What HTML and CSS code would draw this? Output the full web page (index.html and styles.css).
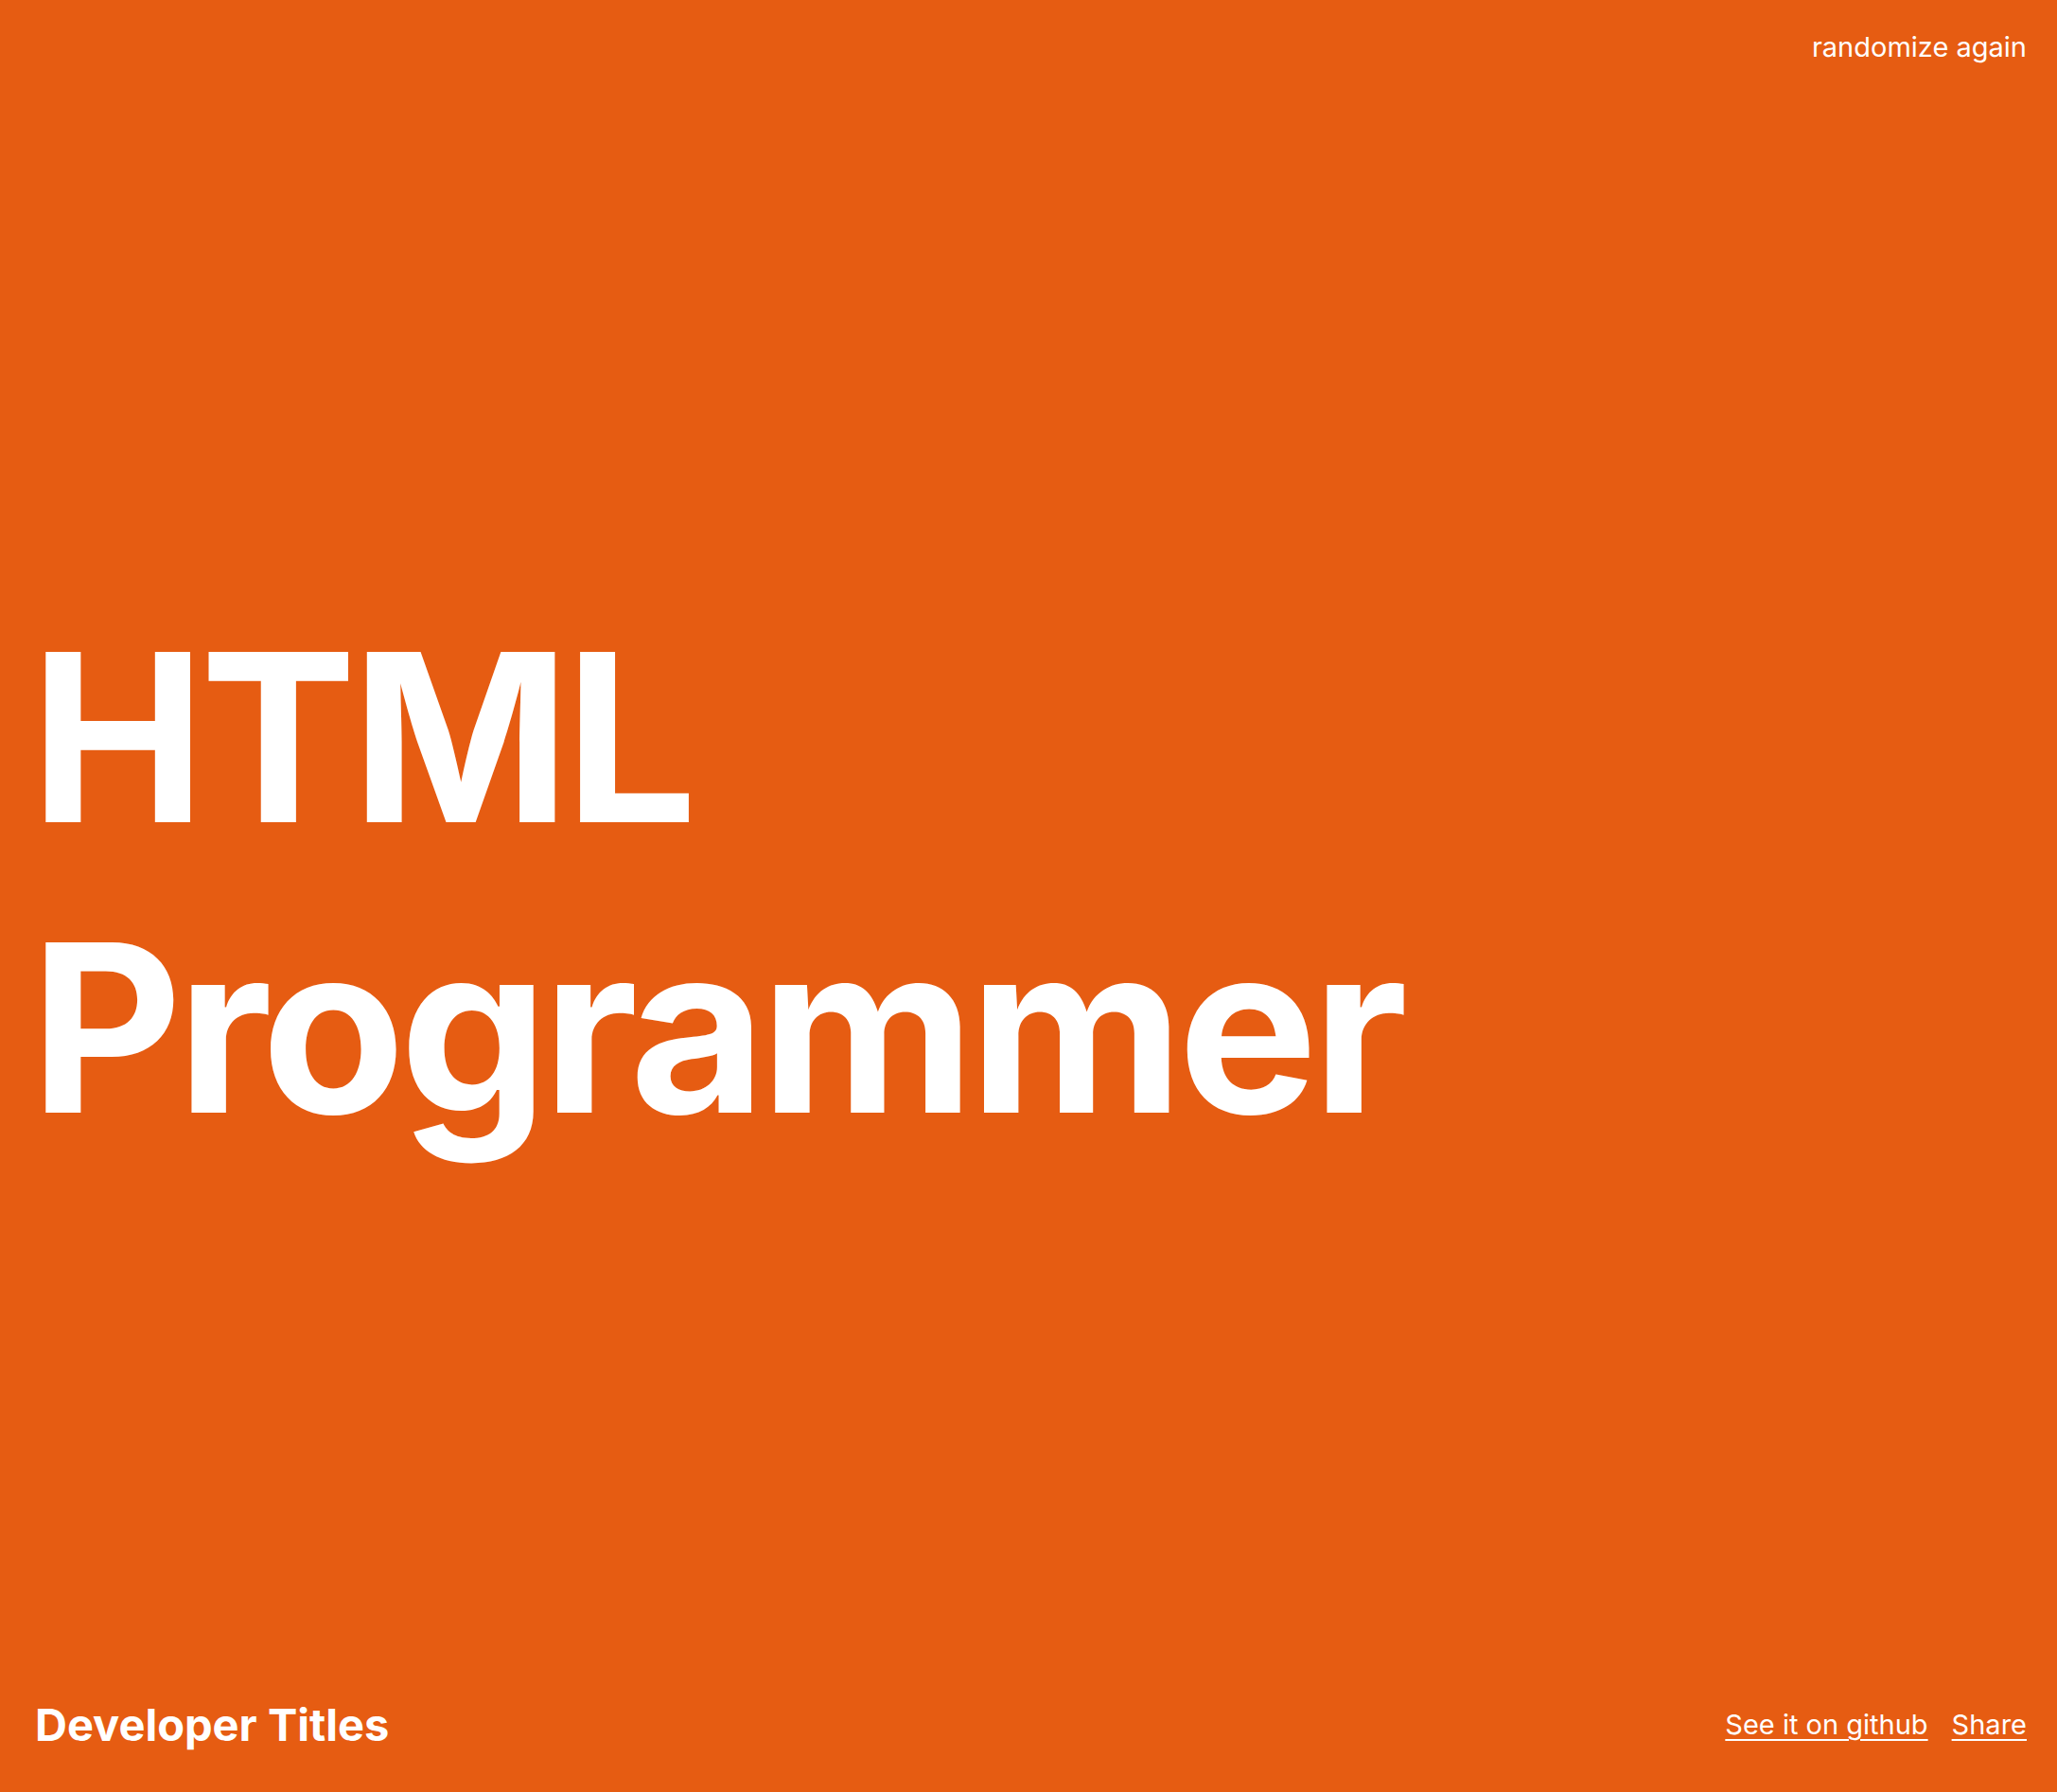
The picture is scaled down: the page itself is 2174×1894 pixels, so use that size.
FILE: index.html
```html
<!DOCTYPE html>
<html lang="en">
<head>
<meta charset="utf-8">
<title>Developer Titles</title>
<link rel="stylesheet" href="styles.css">
</head>
<body>
<div class="page">
  <header class="top">
    <a class="randomize" href="#">randomize again</a>
  </header>
  <main class="stage">
    <h1 class="title">HTML<br>Programmer</h1>
  </main>
  <footer class="bottom">
    <div class="brand">Developer Titles</div>
    <nav class="links">
      <a class="link" href="#">See it on github</a>
      <a class="link" href="#">Share</a>
    </nav>
  </footer>
</div>
</body>
</html>
```
FILE: styles.css
```css
html, body {
  margin: 0;
  padding: 0;
  height: 100%;
}
body {
  background: #e65c12;
  color: #ffffff;
  font-family: Inter, "Noto Sans", "DejaVu Sans", sans-serif;
}
.page {
  box-sizing: border-box;
  min-height: 100vh;
  display: flex;
  flex-direction: column;
  padding: 32px;
}
.top {
  display: flex;
  justify-content: flex-end;
}
.randomize {
  color: #ffffff;
  text-decoration: none;
  font-size: 29px;
  line-height: 36px;
}
.stage {
  flex: 1;
  display: flex;
  align-items: center;
  padding-top: 3px;
}
.title {
  margin: 0;
  font-size: 248px;
  font-weight: 700;
  line-height: 307px;
  letter-spacing: -0.023em;
}
.bottom {
  display: flex;
  justify-content: space-between;
  align-items: center;
  padding: 0 0 11px 5px;
}
.brand {
  font-size: 47px;
  font-weight: 700;
  line-height: 56px;
}
.links {
  display: flex;
  gap: 25px;
}
.link {
  color: #ffffff;
  font-size: 29px;
  line-height: 36px;
  text-decoration: underline;
  text-underline-offset: 5px;
  text-decoration-thickness: 2px;
}
```
